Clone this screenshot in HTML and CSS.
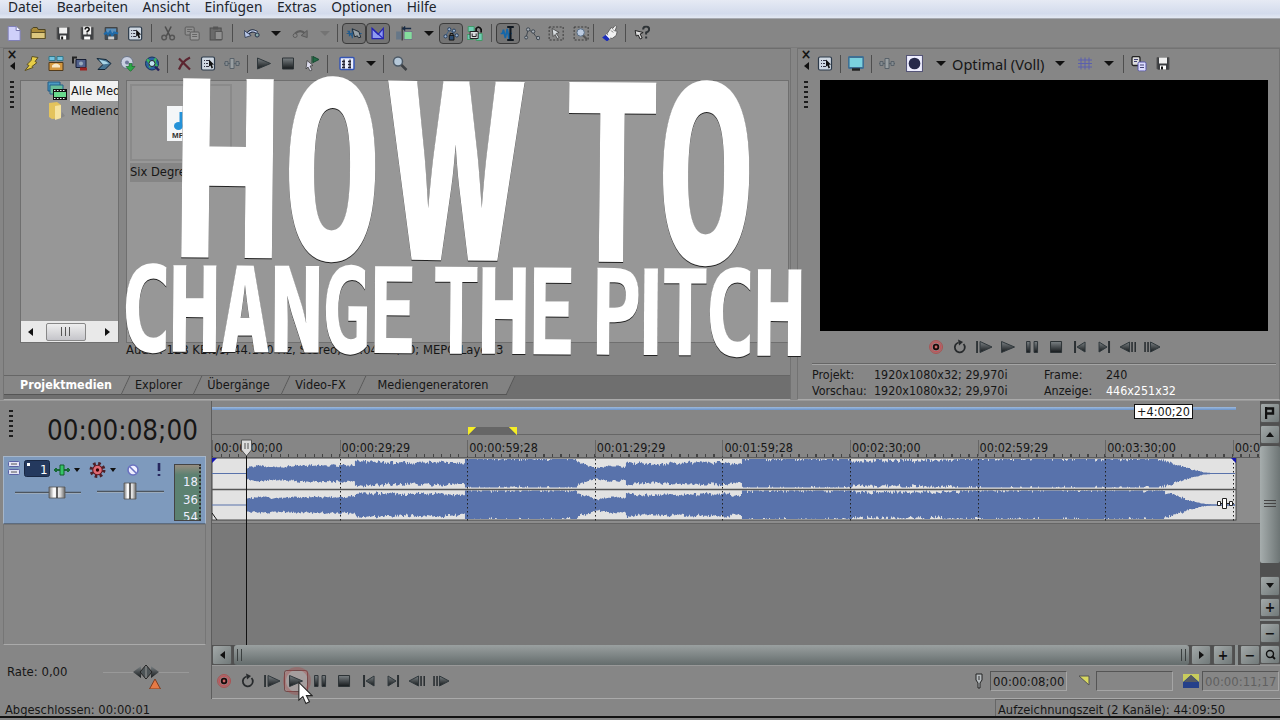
FILE: index.html
```html
<!DOCTYPE html>
<html lang="de">
<head>
  <meta charset="UTF-8">
  <title>Projekt</title>
  <link rel="stylesheet" href="styles.css">
</head>
<body>

  <!-- icon sprites -->
  <svg class="sprites" width="0" height="0">
    <defs>
      <linearGradient id="metal" x1="0" y1="0" x2="0" y2="1"><stop offset="0" stop-color="#7b8184"/><stop offset="1" stop-color="#15191b"/></linearGradient>
      <linearGradient id="knob" x1="0" y1="0" x2="1" y2="0"><stop offset="0" stop-color="#777"/><stop offset=".3" stop-color="#fff"/><stop offset=".7" stop-color="#ddd"/><stop offset="1" stop-color="#666"/></linearGradient>
    </defs>
    <symbol id="new" viewBox="0 0 16 16"><path d="M2 1h8l4 4v10H2z" fill="#cfd0fa" stroke="#8080b8"/><path d="M10 1v4h4" fill="#fff" stroke="#7777b0"/></symbol>
    <symbol id="open" viewBox="0 0 16 16"><path d="M1 13V4l2-2h4l1 2h7v9z" fill="#a98b3a" stroke="#4c4322"/><path d="M1 7h14v6H1z" fill="#dcc77d" stroke="#5e5127"/></symbol>
    <symbol id="save" viewBox="0 0 16 16"><path d="M2 2h12v12H3l-1-1z" fill="#3b3d40" stroke="#555"/><path d="M4 2h8v6H4z" fill="#eee"/><path d="M5 10h6v4H5z" fill="#fff"/><path d="M6 11h2v3H6z" fill="#111"/></symbol>
    <symbol id="saveas" viewBox="0 0 16 16"><path d="M2 2h12v12H3l-1-1z" fill="#3b3d40" stroke="#555"/><path d="M4 1h8v8H4z" fill="#eee"/><path d="M6 4q0-2 2-2t2 2q0 1-2 2v1M8 8v1" fill="none" stroke="#111" stroke-width="1.500"/><path d="M5 11h6v3H5z" fill="#fff"/></symbol>
    <symbol id="render" viewBox="0 0 16 16"><path d="M2 2h12v12H2z" fill="#3f4d59" stroke="#444"/><path d="M3 3h10v5H3z" fill="#5c8fba"/><path d="M1 9l2-2 2 2 2-3 2 4 2-3 4 1" fill="none" stroke="#1f6aa8" stroke-width="2"/><path d="M5 11h6v3H5z" fill="#ccc"/></symbol>
    <symbol id="props" viewBox="0 0 16 16"><rect x="1.500" y="1.500" width="13" height="13" rx="1.500" fill="#cfd8e2" stroke="#2c3a4a" stroke-width="1.200"/><path d="M4 5h1M6 5h3M4 8h1M6 8h2M4 11h1M6 11h3" stroke="#334" stroke-width="1.200"/><path d="M9 4l5 5-2 .3 1 3-1.500.7-1-3L9 11z" fill="#111"/></symbol>
    <symbol id="cut" viewBox="0 0 16 16"><path d="M5 1l5 10M11 1L6 11" stroke="#4d4d4d" stroke-width="1.600"/><circle cx="4" cy="12" r="2.300" fill="none" stroke="#555" stroke-width="1.500"/><circle cx="12" cy="12" r="2.300" fill="none" stroke="#555" stroke-width="1.500"/></symbol>
    <symbol id="copy" viewBox="0 0 16 16"><rect x="1" y="1.500" width="9" height="8" rx="1" fill="#8f8f8f" stroke="#5c5c5c"/><rect x="6" y="6.500" width="9" height="8" rx="1" fill="#999" stroke="#5c5c5c"/><path d="M3 4h5M3 6h3M8 9h5M8 11h5" stroke="#666"/></symbol>
    <symbol id="paste" viewBox="0 0 16 16"><rect x="2" y="2.500" width="11" height="12" fill="#6a6a6a" stroke="#4d4d4d"/><path d="M5 1h5v3H5z" fill="#555"/><path d="M7 6h7v8H7z" fill="#919191" stroke="#555"/></symbol>
    <symbol id="undo" viewBox="0 0 16 16"><path d="M3 9q4-6 10-2" fill="none" stroke="#222d44" stroke-width="3"/><path d="M3 9q4-6 10-2" fill="none" stroke="#c5d4f2" stroke-width="1.200"/><path d="M0 5l1 7 6-2z" fill="#b9c8ea" stroke="#26324a" stroke-width=".8"/><circle cx="13" cy="9.500" r="2" fill="#8aa" stroke="#26324a"/></symbol>
    <symbol id="redo" viewBox="0 0 16 16"><path d="M3 8q5-5 10 0" fill="none" stroke="#5d5d5d" stroke-width="2.200"/><path d="M15 5l0 7-6-2z" fill="#777" stroke="#5a5a5a"/><circle cx="3" cy="10" r="2" fill="#888" stroke="#5d5d5d"/></symbol>
    <symbol id="snap" viewBox="0 0 16 16"><path d="M0 8h16M3 5v6M1 5l5 6M6 3v10" fill="none" stroke="#235b8c" stroke-width="1.300"/><path d="M6 3l7 3 2 6-2.500.5-1-2-3 1z" fill="#98a2a8" stroke="#1b2733"/></symbol>
    <symbol id="fade" viewBox="0 0 16 16"><path d="M1.500 2.500v11h12v-11L8 9z" fill="#8f9af0" stroke="#2525b0" stroke-width="1.300"/><path d="M1.500 2.500l12 11" stroke="#2121b8" stroke-width="1.300"/></symbol>
    <symbol id="ripple" viewBox="0 0 16 16"><path d="M6 1v14" stroke="#222"/><path d="M0 6h5v8H0z" fill="#678"/><path d="M8 6h8v8H8z" fill="#85dd9d" stroke="#527"  stroke-width=".4"/><path d="M15 3H7l2-2M7 3l2 2" fill="none" stroke="#182b44" stroke-width="1.400"/></symbol>
    <symbol id="envlock" viewBox="0 0 16 16"><path d="M2 11l4-7 4 3 4 4" fill="none" stroke="#3c628e"/><g fill="#9db4cf" stroke="#233c5c"><circle cx="2" cy="11" r="1.700"/><circle cx="6" cy="3.500" r="1.700"/><circle cx="11" cy="5" r="1.700"/><circle cx="14" cy="10" r="1.700"/></g><path d="M6 10h5v5H6z" fill="#2b4b70" stroke="#111"/><path d="M7 10V8h3v2" fill="none" stroke="#111"/></symbol>
    <symbol id="grouplock" viewBox="0 0 16 16"><path d="M1 1h6v5H1zM0 9h6v5H0zM9 8h6v7H9z" fill="#70cbb4" stroke="#496"/><path d="M3 6h8v7H3z" fill="#d8dcde" stroke="#222"/><path d="M9 6V3q3-3 5 1v3" fill="none" stroke="#111" stroke-width="1.700"/><path d="M5 8v3h4V8" stroke="#222" fill="none"/></symbol>
    <symbol id="edit" viewBox="0 0 16 16"><path d="M0 8h2l1-4 2 9 2-10 2 11 1-6h2" fill="none" stroke="#1467aa" stroke-width="1.800"/><path d="M7 1h7M7 15h7M10.500 1v14" stroke="#101820" stroke-width="2.200"/></symbol>
    <symbol id="env" viewBox="0 0 16 16"><path d="M2 12l2-8 5 3 2 3 3 3" fill="none" stroke="#414850"/><g fill="#a6adb5" stroke="#3d4650"><circle cx="2" cy="12" r="1.500"/><circle cx="4" cy="4" r="1.700"/><circle cx="9" cy="6" r="1.700"/><circle cx="14" cy="12.500" r="1.700"/></g></symbol>
    <symbol id="select" viewBox="0 0 16 16"><rect x="1" y="1.500" width="14" height="13" fill="none" stroke="#3a3a3a" stroke-dasharray="2 1.500"/><path d="M4 3l7 4-3 1 3 4-2 1-2-4-2 2z" fill="#d7dcdf" stroke="#333" stroke-width=".7"/></symbol>
    <symbol id="zoomsel" viewBox="0 0 16 16"><rect x="1" y="1.500" width="14" height="13" fill="none" stroke="#3a3a3a" stroke-dasharray="2 1.500"/><circle cx="7.500" cy="7" r="3.700" fill="#bccbe0" stroke="#5a7089"/><path d="M10 10l4 4" stroke="#555" stroke-width="2"/></symbol>
    <symbol id="hand" viewBox="0 0 16 16"><path d="M5 8l4-6 1.500 1L13 0l1.500 1-1.500 4 2 1-1 4-4 3-4-1z" fill="#f0f0f0" stroke="#444" stroke-width=".7"/><path d="M9 5l2 2M11 4l2 2" stroke="#555" stroke-width=".8"/><path d="M0 12l4-3 4 4-3 3z" fill="#1b2dbb"/><path d="M4 9l4 4" stroke="#fff" stroke-width="1.200"/></symbol>
    <symbol id="help" viewBox="0 0 16 16"><path d="M1 5l8 2-3 1.500 2 4-2 1-2-4-2 1z" fill="#ddd" stroke="#222"/><path d="M9 4q0-3 3-3t3 3q0 2-3 3v2M12 11v2" fill="none" stroke="#2e3336" stroke-width="2"/></symbol>
    <symbol id="bolt" viewBox="0 0 16 16"><path d="M8 1l6 1-3 4 2 1-5 4 1 1-8 3 4-5-2-1 4-4z" fill="#e7cd48" stroke="#5d5222"/></symbol>
    <symbol id="import" viewBox="0 0 16 16"><path d="M1 1h6v4H1zM9 1h6v4H9z" fill="#72c2df" stroke="#378"/><path d="M1 7h14v8H1z" fill="#d49840" stroke="#533b1b"/><path d="M4 10q4-4 8 0v2H4z" fill="#f7e8c6"/></symbol>
    <symbol id="camera" viewBox="0 0 16 16"><path d="M1 1v7M0 2h5" stroke="#222" stroke-width="2"/><path d="M4 4h10v8H4z" fill="#52618c" stroke="#161d33"/><circle cx="9" cy="8" r="2" fill="#9ab"/><path d="M8 12h7v3H8z" fill="#9c2422"/></symbol>
    <symbol id="scan" viewBox="0 0 16 16"><path d="M1 3l9 1 5 4-6 6H2l5-5z" fill="#467493" stroke="#132738"/><path d="M3 4l7 2 3 2-6 1z" fill="#a8d5e7"/></symbol>
    <symbol id="disc" viewBox="0 0 16 16"><circle cx="7" cy="7" r="6" fill="#c8cfe0" stroke="#6b7587"/><circle cx="7" cy="7" r="2" fill="#70789a"/><path d="M9 8h3v3h3l-4.500 5L6 11h3z" fill="#2ba848" stroke="#145c26" stroke-width=".6"/></symbol>
    <symbol id="web" viewBox="0 0 16 16"><circle cx="8" cy="8" r="6.500" fill="#2c62a0" stroke="#15335d"/><path d="M3 4q4 3 3 8M12 3q-3 3 1 8" stroke="#36b65c" stroke-width="2.400" fill="none"/><circle cx="8" cy="8" r="3" fill="#bfe2ef" stroke="#223"/><path d="M11 11l4 4" stroke="#27215c" stroke-width="2.400"/></symbol>
    <symbol id="delete" viewBox="0 0 16 16"><path d="M3 3l11 11M14 2Q6 6 3 14" fill="none" stroke="#5c2530" stroke-width="2.200"/></symbol>
    <symbol id="fx" viewBox="0 0 16 16"><path d="M0 8h16" stroke="#555e66"/><path d="M6 3h4v10H6z" fill="#999fa2" stroke="#59626a"/><path d="M1 6h3v4H1zM12 6h3v4h-3z" fill="#848b90" stroke="#59626a"/></symbol>
    <symbol id="play" viewBox="0 0 16 16"><path d="M1.500 2.500l13 5.500-13 5.500z" fill="url(#metal)" stroke="#30383c"/></symbol>
    <symbol id="stop" viewBox="0 0 16 16"><path d="M2.500 2.500h11v11h-11z" fill="url(#metal)" stroke="#2d3336"/></symbol>
    <symbol id="auto" viewBox="0 0 16 16"><path d="M8 0v8M9 1l6 3-6 3z" fill="#226b45" stroke="#164a30"/><path d="M3 5l6 5-3 .5 2 4-2 1-2-4-2 2z" fill="#dde" stroke="#333" stroke-width=".7"/></symbol>
    <symbol id="views" viewBox="0 0 16 16"><rect x="1" y="2" width="14" height="12" rx="1" fill="#ebeffd" stroke="#3555b4" stroke-width="1.500"/><path d="M3 6h3M3 9h3M3 12h3M9 6h3M9 9h3M9 12h3M5 4v9M11 4v9" stroke="#223" stroke-width="1.300"/></symbol>
    <symbol id="search" viewBox="0 0 16 16"><circle cx="6" cy="6" r="4.500" fill="#b5c8d9" stroke="#4c5966" stroke-width="1.500"/><path d="M9.500 9.500l5 5" stroke="#3d4044" stroke-width="2.500"/></symbol>
    <symbol id="monitor" viewBox="0 0 16 16"><rect x="0.700" y="1.500" width="14.600" height="11" rx="1" fill="#7bd1de" stroke="#3f6f93" stroke-width="1.800"/><path d="M4 14h8" stroke="#222" stroke-width="2.400"/></symbol>
    <symbol id="mask" viewBox="0 0 16 16"><path d="M.5.500h15v15H.5z" fill="#eef" stroke="#557"/><circle cx="8" cy="8" r="5.500" fill="#26294a"/></symbol>
    <symbol id="grid" viewBox="0 0 16 16"><path d="M4 2v12M8 2v12M12 2v12M1 4.500h14M1 8h14M1 11.500h14" stroke="#5a5fae"/></symbol>
    <symbol id="copy2" viewBox="0 0 16 16"><rect x="1" y="1" width="8" height="9" rx="1.500" fill="#ddd" stroke="#222" stroke-width="1.300"/><rect x="7" y="6.500" width="8" height="9" rx="1.500" fill="#dcdcff" stroke="#5555a8"/><path d="M3 4h4M3 6h3M9 9.500h4M9 12h4" stroke="#447"/></symbol>
    <symbol id="record" viewBox="0 0 16 16"><circle cx="8" cy="8" r="6.500" fill="#a17070" stroke="#a85555"/><circle cx="8" cy="8" r="4.800" fill="#9b8080" stroke="#cc4d55"/><circle cx="8" cy="8" r="2.300" fill="#c66" stroke="#180b0b" stroke-width="1.800"/></symbol>
    <symbol id="loop" viewBox="0 0 16 16"><path d="M11.500 5a5 5 0 1 1-5-1.500" fill="none" stroke="#272a2c" stroke-width="1.800"/><path d="M6 .5l5 2.500-4 3.500z" fill="#272a2c"/></symbol>
    <symbol id="playstart" viewBox="0 0 16 16"><path d="M1 2v12" stroke="#2b3033" stroke-width="1.800"/><path d="M4 2.500l12 5.500-12 5.500z" fill="url(#metal)" stroke="#30383c"/></symbol>
    <symbol id="pause" viewBox="0 0 16 16"><path d="M2.500 2.500h3.500v11H2.500zM10 2.500h3.500v11H10z" fill="url(#metal)" stroke="#30363a"/></symbol>
    <symbol id="first" viewBox="0 0 16 16"><path d="M3 2v12" stroke="#2b3033" stroke-width="2"/><path d="M13 3v10L5 8z" fill="url(#metal)" stroke="#30383c"/></symbol>
    <symbol id="last" viewBox="0 0 16 16"><path d="M13 2v12" stroke="#2b3033" stroke-width="2"/><path d="M3 3v10l8-5z" fill="url(#metal)" stroke="#30383c"/></symbol>
    <symbol id="prev" viewBox="0 0 16 16"><path d="M12 3v10M15.200 3v10" stroke="#2b3033" stroke-width="1.600"/><path d="M9.500 3v10L0 8z" fill="url(#metal)" stroke="#30383c"/></symbol>
    <symbol id="next" viewBox="0 0 16 16"><path d="M1 3v10M4 3v10" stroke="#2b3033" stroke-width="1.600"/><path d="M6.500 3v10L16 8z" fill="url(#metal)" stroke="#30383c"/></symbol>
    <symbol id="gear" viewBox="0 0 16 16"><circle cx="8" cy="8" r="6" fill="none" stroke="#4d2027" stroke-width="3" stroke-dasharray="2.400 2.300"/><circle cx="8" cy="8" r="4.500" fill="#e06a74" stroke="#5f1820"/><circle cx="8" cy="8" r="1.600" fill="#300"/></symbol>
  </svg>

  <nav class="menu">
    <span>Datei</span><span>Bearbeiten</span><span>Ansicht</span><span>Einfügen</span><span>Extras</span><span>Optionen</span><span>Hilfe</span>
  </nav>

  <div class="toolbar main-bar">
    <svg><use href="#new"/></svg><svg><use href="#open"/></svg><svg><use href="#save"/></svg><svg><use href="#saveas"/></svg><svg><use href="#render"/></svg><svg><use href="#props"/></svg>
    <i class="sep"></i>
    <svg><use href="#cut"/></svg><svg><use href="#copy"/></svg><svg><use href="#paste"/></svg>
    <i class="sep wide"></i>
    <svg><use href="#undo"/></svg><i class="drop"></i><svg><use href="#redo"/></svg><i class="drop off"></i>
    <i class="sep tight"></i>
    <svg class="on"><use href="#snap"/></svg><svg class="on"><use href="#fade"/></svg><svg class="nudge"><use href="#ripple"/></svg><i class="drop nudge"></i><svg class="on"><use href="#envlock"/></svg><svg><use href="#grouplock"/></svg>
    <i class="sep"></i>
    <svg class="on"><use href="#edit"/></svg><svg><use href="#env"/></svg><svg><use href="#select"/></svg><svg><use href="#zoomsel"/></svg>
    <i class="sep tight"></i>
    <svg><use href="#hand"/></svg>
    <i class="sep"></i>
    <svg><use href="#help"/></svg>
  </div>

  <main class="upper">
    <section class="media">
      <div class="gutter"><b>×</b><i class="tri-left"></i><i class="grip"></i></div>
      <div class="media-body">
        <div class="toolbar">
          <svg><use href="#bolt"/></svg><svg><use href="#import"/></svg><svg><use href="#camera"/></svg><svg><use href="#scan"/></svg><svg><use href="#disc"/></svg><svg><use href="#web"/></svg>
          <i class="sep"></i>
          <svg><use href="#delete"/></svg><svg><use href="#props"/></svg><svg><use href="#fx"/></svg>
          <i class="sep"></i>
          <svg><use href="#play"/></svg><svg><use href="#stop"/></svg><svg><use href="#auto"/></svg>
          <i class="sep wide"></i>
          <svg><use href="#views"/></svg><i class="drop"></i>
          <i class="sep tight"></i>
          <svg><use href="#search"/></svg>
        </div>
        <div class="browser">
          <div class="tree">
            <div class="node">
              <svg viewBox="0 0 20 20"><path d="M1 1h12v9H1z" fill="#4b9bc2" stroke="#235b83"/><path d="M3 4h13v9H3z" fill="#69bf9a" stroke="#24618c"/><path d="M6 8h14v11H6z" fill="#111"/><path d="M7 11h12v5H7z" fill="#68d98c"/><path d="M7 9.500h12M7 17.500h12" stroke="#eee" stroke-dasharray="1.500 1.500"/></svg>
              <span class="picked">Alle Medien</span>
            </div>
            <div class="node">
              <svg viewBox="0 0 20 20"><path d="M2 2l8-1 4 3v13l-9 1-3-2z" fill="#e3c35c"/><path d="M8 5l6-1v13l-6 2z" fill="#f5e3a0"/><path d="M15 11l3 4-4 2z" fill="#777" opacity=".5"/></svg>
              <span>Medienordner</span>
            </div>
            <div class="tree-scroll"><i class="tri-left"></i><b></b><i class="tri-right"></i></div>
          </div>
          <div class="files">
            <div class="thumb">
              <svg width="34" height="35" viewBox="0 0 34 35"><path d="M0 0h34v35H0z" fill="#f4f6f8"/><ellipse cx="11.500" cy="20" rx="4.500" ry="4" fill="#2492d8"/><path d="M14 6v14" stroke="#2492d8" stroke-width="3"/><text x="5" y="32" class="mp3">MP3</text></svg>
            </div>
            <div class="file-name">Six Degrees</div>
          </div>
        </div>
        <div class="file-info">Audio: 128 KBit/s, 44.100 Hz, Stereo, 00:04:00;20; MEPG Layer 3</div>
      </div>
      <div class="tabs">
        <span class="active">Projektmedien</span><span>Explorer</span><span>Übergänge</span><span>Video-FX</span><span>Mediengeneratoren</span>
      </div>
    </section>

    <section class="preview">
      <div class="gutter"><b>×</b><i class="tri-left"></i><i class="grip"></i></div>
      <div class="preview-body">
        <div class="toolbar">
          <svg><use href="#props"/></svg><i class="sep"></i><svg><use href="#monitor"/></svg><i class="sep"></i><svg><use href="#fx"/></svg><svg class="mask"><use href="#mask"/></svg><i class="drop small"></i><span class="quality">Optimal (Voll)</span><i class="drop"></i><svg class="hash"><use href="#grid"/></svg><i class="drop small"></i><i class="sep"></i><svg><use href="#copy2"/></svg><svg><use href="#save"/></svg>
        </div>
        <div class="screen"></div>
        <div class="transport">
          <svg><use href="#record"/></svg><svg><use href="#loop"/></svg><svg><use href="#playstart"/></svg><svg><use href="#play"/></svg><svg><use href="#pause"/></svg><svg><use href="#stop"/></svg><svg><use href="#first"/></svg><svg><use href="#last"/></svg><svg><use href="#prev"/></svg><svg><use href="#next"/></svg>
        </div>
        <div class="facts">
          <span>Projekt:</span><span>1920x1080x32; 29,970i</span><span>Frame:</span><span>240</span>
          <span>Vorschau:</span><span>1920x1080x32; 29,970i</span><span>Anzeige:</span><span class="lit">446x251x32</span>
        </div>
      </div>
    </section>
  </main>

  <section class="timeline">
    <div class="left-col">
      <div class="timecode"><i class="grip"></i><span>00:00:08;00</span></div>
      <div class="track-head">
        <svg width="171" height="67" viewBox="0 0 171 67">
          <g fill="#e4e4f5" stroke="#5a61a5"><rect x="4.500" y="4.500" width="11" height="5" rx="1"/><rect x="4.500" y="12.500" width="11" height="5" rx="1"/></g>
          <path d="M7 7h6M7 15h6" stroke="#555"/>
          <rect x="20.500" y="3.500" width="25" height="16" rx="2" fill="#24395e" stroke="#182742"/>
          <path d="M23 6h3v3h-3z" fill="#fff"/><text x="36" y="17" class="num">1</text>
          <path d="M50 13h16" stroke="#176b35" stroke-width="2"/><path d="M56 8h4v10h-4z" fill="#35c566" stroke="#125c2b"/><path d="M51 11h2v4h-2zM63 11h2v4h-2z" fill="#176b35"/>
          <path d="M70 11h6l-3 4zM106 11h6l-3 4z" fill="#111"/>
          <use href="#gear" x="85" y="4.500" width="17" height="17"/>
          <circle cx="129" cy="13" r="5" fill="#eef" stroke="#6a72c0" stroke-width="1.600"/><path d="M126 10l6 6" stroke="#6a72c0" stroke-width="1.600"/>
          <path d="M155 6v8M155 17v2" stroke="#27275e" stroke-width="2.600"/>
          <path d="M11 35.500h66M93 34.500h67" stroke="#4d555e" stroke-width="1.500"/>
          <path d="M11 36.500h66M93 35.500h67" stroke="#b9c2cc" stroke-width=".6"/>
          <path d="M45 30h16v11H45z" fill="url(#knob)" stroke="#555" stroke-width=".8"/>
          <path d="M120 26h12v16h-12z" fill="url(#knob)" stroke="#555" stroke-width=".8"/>
          <path d="M53 30v11M126 26v16" stroke="#333" stroke-width="1.500"/>
        </svg>
        <div class="meter"><span>18</span><span>36</span><span>54</span></div>
      </div>
      <div class="empty-head"></div>
      <div class="rate">
        <span>Rate: 0,00</span>
        <svg width="94" height="30" viewBox="0 0 94 30"><path d="M4 13.500h86" stroke="#999"/><path d="M34 13l8-6v12zM60 13l-8-6v12z" fill="url(#metal)"/><path d="M47 6l6 7-6 7-6-7z" fill="#4d5457" stroke="#222"/><path d="M47 7v12" stroke="#999"/><path d="M56 20l5.500 10h-11z" fill="#e57a45" stroke="#7d3c20"/></svg>
      </div>
    </div>

    <div class="right-col">
      <div class="marker-bar">
        <i class="extent"></i>
        <span class="tip">+4:00;20</span>
        <i class="region"></i>
      </div>
      <div class="ruler" id="ruler"></div>
      <div class="track">
        <svg id="wave" width="1048" height="65" viewBox="212 459 1048 65"></svg>
      </div>
      <div class="void"></div>
      <div class="hscroll">
        <b><i class="tri-left"></i></b><span class="hthumb"><i></i><i></i></span><b><i class="tri-right"></i></b><b>+</b><em></em><b>−</b>
      </div>
      <div class="controls">
        <svg><use href="#record"/></svg><svg><use href="#loop"/></svg><svg><use href="#playstart"/></svg><svg class="pressed"><use href="#play"/></svg><svg><use href="#pause"/></svg><svg><use href="#stop"/></svg><svg><use href="#first"/></svg><svg><use href="#last"/></svg><svg><use href="#prev"/></svg><svg><use href="#next"/></svg>
        <div class="fields">
          <svg viewBox="0 0 16 16"><path d="M5 1h6v6l-2 3v5H7v-5L5 7z" fill="#b5babd" stroke="#222"/><path d="M8 3v4" stroke="#333"/></svg>
          <span class="field">00:00:08;00</span>
          <svg viewBox="0 0 16 16"><path d="M2 3h10v9z" fill="#d8d860" stroke="#555"/></svg>
          <span class="field"></span>
          <svg viewBox="0 0 16 16"><path d="M0 1h16v9H0z" fill="#c8cc5c"/><path d="M8 2l8 7v6H0V9z" fill="#25408a"/><path d="M8 2l7 7H1z" fill="#555a62"/></svg>
          <span class="field dim">00:00:11;17</span>
        </div>
      </div>
    </div>

    <div class="vscroll">
      <b><svg width="10" height="12" viewBox="0 0 10 12"><path d="M1 0v12M1 1.500h7v5H1" fill="none" stroke="#111" stroke-width="2.400"/></svg></b>
      <b><i class="tri-up"></i></b>
      <span class="vthumb"></span>
      <b><i class="tri-down"></i></b><b>+</b><em></em><b>−</b>
      <b><svg width="11" height="11" viewBox="0 0 11 11"><circle cx="5" cy="5" r="3.500" fill="none" stroke="#111" stroke-width="1.400"/><path d="M7 7l3 3" stroke="#111" stroke-width="1.800"/></svg></b>
    </div>
  </section>

  <footer class="status">
    <span>Abgeschlossen: 00:00:01</span>
    <span class="rec-time">Aufzeichnungszeit (2 Kanäle): 44:09:50</span>
  </footer>

  <svg class="overlay" id="playhead" width="1280" height="720"></svg>
  <svg class="overlay headline" id="headline" width="1280" height="720"></svg>

  <i class="click-ring"></i>
  <svg class="cursor" width="15" height="24" viewBox="0 0 17 26"><path d="M1 1v20l4.500-4 3.500 8 4-2-3.500-7H16z" fill="#fff" stroke="#222" stroke-width="1.200"/></svg>

  <script src="script.js"></script>
</body>
</html>
```
FILE: styles.css
```css
* {
  box-sizing: border-box;
}
body {
  margin: 0;
  width: 1280px;
  height: 720px;
  overflow: hidden;
  position: relative;
  display: flex;
  flex-direction: column;
  background: #868686;
  color: #161616;
  font-family: "DejaVu Sans Condensed", "DejaVu Sans", sans-serif;
  font-stretch: condensed;
  font-size: 12px;
}
i, b, em {
  font-style: normal;
}
svg {
  display: block;
  flex: none;
}
.sprites {
  position: absolute;
}

/* menu */
.menu {
  height: 19px;
  display: flex;
  gap: 14.500px;
  padding: 0 8px;
  background: linear-gradient(#e6eaf4, #d3dbec 75%, #e3e8f2);
  border-bottom: 1px solid #a6a9b0;
  font-family: "Noto Sans", sans-serif;
  font-size: 13.800px;
  font-stretch: normal;
  line-height: 14px;
  color: #20242c;
}

/* toolbars */
.toolbar {
  display: flex;
  align-items: center;
  height: 31px;
  padding-bottom: 2px;
}
.toolbar > svg {
  width: 24px;
  height: 21px;
  padding: 2.500px 4px;
}
.main-bar {
  height: 29px;
  padding: 0 0 0 2px;
  border-bottom: 1px solid #7b7b7b;
}
.main-bar > svg, .main-bar > .drop {
  width: 24.300px;
}
.toolbar > .on {
  border: 1px solid #3c3c3c;
  border-radius: 4px;
  background: #747474;
  padding: 2px 3px;
}
.toolbar > .nudge {
  transform: translateX(2px);
}
.sep {
  width: 1px;
  height: 18px;
  margin: 0 4px 0 3px;
  background: #4e4e4e;
}
.sep.wide {
  margin-right: 7px;
}
.sep.tight {
  margin: 0 4px 0 0;
}
.drop {
  width: 24px;
  display: flex;
  justify-content: center;
}
.drop::after {
  content: "";
  border: 5px solid transparent;
  border-top-color: #111;
  border-bottom: 0;
}
.drop.off::after {
  border-top-color: #747474;
}
.preview .drop.small {
  width: 22px;
}
.tri-left, .tri-right, .tri-up, .tri-down {
  width: 0;
  height: 0;
  border: 4px solid transparent;
}
.tri-left { border-right: 5px solid #111; border-left: 0; }
.tri-right { border-left: 5px solid #111; border-right: 0; }
.tri-up { border-bottom: 5px solid #111; border-top: 0; }
.tri-down { border-top: 5px solid #111; border-bottom: 0; }
.grip {
  width: 4px;
  height: 30px;
  background: repeating-linear-gradient(#1d1d1d 0 2px, transparent 2px 5px);
}
.gutter {
  width: 16px;
  display: flex;
  flex-direction: column;
  align-items: center;
}
.gutter b {
  height: 14px;
  margin-top: -1px;
  font-size: 14px;
  line-height: 13px;
}
.gutter .grip {
  margin-top: 11px;
}

/* upper docks */
.upper {
  display: flex;
  height: 352px;
  gap: 6px;
  padding-left: 3px;
}
.media {
  width: 788px;
  display: grid;
  grid-template-columns: 16px 1fr;
  grid-template-rows: 1fr 24px;
  border: 1px solid #737373;
  border-top-color: #6d6d6d;
  border-bottom-color: #aaa;
}
.browser {
  display: flex;
  gap: 7px;
  height: 263px;
}
.tree {
  width: 99px;
  background: #979797;
  border: 1px solid #6f6f6f;
  overflow: hidden;
  display: flex;
  flex-direction: column;
}
.node {
  display: flex;
  height: 20px;
  padding-left: 26px;
}
.node svg {
  width: 20px;
  height: 20px;
}
.node span {
  margin-left: 3px;
  padding-left: 1px;
  width: 80px;
  font-size: 12.800px;
  line-height: 20px;
  white-space: nowrap;
}
.node .picked {
  background: #f1f1f1;
}
.tree-scroll {
  margin-top: auto;
  height: 21px;
  display: flex;
  align-items: center;
  justify-content: space-between;
  padding: 0 8px 0 7px;
  background: #e9e9e9;
}
.tree-scroll b {
  width: 40px;
  height: 18px;
  margin-right: 7px;
  border: 1px solid #888;
  border-radius: 2px;
  background: repeating-linear-gradient(90deg, #555 0 1px, transparent 1px 4px) center / 10px 9px no-repeat, linear-gradient(#eee, #c5c5ca);
}
.files {
  width: 663px;
  background: #979797;
  border: 1px solid #6f6f6f;
  padding: 3px;
}
.thumb {
  width: 102px;
  height: 77px;
  border: 2px solid #8a8a8a;
  padding: 20px 0 0 35px;
}
.mp3 {
  font: bold 8px "Liberation Sans", sans-serif;
  fill: #333;
}
.file-name {
  width: 102px;
  height: 19px;
  margin-top: 2px;
  background: #858585;
  font-size: 12.800px;
  line-height: 18px;
}
.file-info {
  padding: 0 0 0 106px;
  line-height: 14px;
  font-size: 12.900px;
}
.tabs {
  grid-column: 1 / 3;
  display: flex;
  align-items: center;
  background: #6f6f6f;
  border-top: 1px solid #666;
  overflow: hidden;
}
.tabs span {
  position: relative;
  z-index: 0;
  height: 19px;
  align-self: flex-start;
  text-align: center;
  line-height: 18px;
  width: 72px;
  padding-right: 7px;
  font-size: 12.600px;
}
.tabs span::before {
  content: "";
  position: absolute;
  z-index: -1;
  inset: 0;
  background: #828282;
  border-right: 1px solid #555;
  border-bottom: 1px solid #555;
  transform: skewX(-25deg);
}
.tabs .active {
  width: 122px;
  padding: 0 0 0 2px;
  color: #fff;
  font-weight: bold;
  font-size: 12.400px;
}
.tabs .active::before {
  left: -10px;
  background: #868686;
}
.tabs span:nth-child(3) { width: 88px; }
.tabs span:nth-child(4) { width: 76px; }
.tabs span:nth-child(5) { width: 149px; }

/* preview dock */
.preview {
  width: 483px;
  display: flex;
  border: 1px solid #737373;
  border-bottom-color: #aaa;
}
.preview-body {
  flex: 1;
  padding-right: 3px;
}
.preview .toolbar {
  margin-left: -1px;
}
.preview .toolbar > .sep {
  margin: 0 3px;
}
.toolbar > .mask {
  width: 31px;
  height: 17px;
  padding: 0 7px;
}
.toolbar > .hash {
  width: 26px;
}
.quality {
  width: 96px;
  font-family: "Noto Sans", sans-serif;
  font-size: 14.600px;
  font-stretch: normal;
  white-space: nowrap;
}
.screen {
  width: 448px;
  height: 251px;
  margin-left: 6px;
  background: #000;
}
.transport {
  display: flex;
  justify-content: center;
  height: 32px;
  align-items: center;
  padding: 0 2px 0 0;
}
.transport svg, .controls > svg {
  width: 24.100px;
  height: 16px;
  padding: 0 4px;
}
.facts {
  display: grid;
  grid-template-columns: 62px 170px 62px 1fr;
  border-top: 1px solid #666;
  box-shadow: inset 0 1px #a5a5a5;
  padding-top: 3px;
  margin-left: -2px;
  line-height: 16px;
  font-size: 12.400px;
}
.lit {
  color: #fff;
}

/* timeline */
.timeline {
  display: grid;
  grid-template-columns: 208px 1049px 20px;
  padding-left: 3px;
  height: 299px;
  border-top: 1px solid #999;
}
.left-col {
  display: flex;
  flex-direction: column;
  padding-right: 5px;
}
.timecode {
  height: 55px;
  display: flex;
  padding: 9px 0 0 6px;
}
.timecode span {
  margin-left: 34px;
  font-size: 27.500px;
  line-height: 40px;
}
.track-head {
  height: 68px;
  display: flex;
  background: #7e9abd;
  border: 1px solid #a5b6ca;
  border-bottom-color: #5c6c80;
  overflow: hidden;
}
.num {
  font: 12px "DejaVu Sans", sans-serif;
  fill: #fff;
}
.meter {
  width: 27px;
  height: 57px;
  margin: 7px 0 0 -1px;
  padding: 8px 1px 0 0;
  overflow: hidden;
  display: flex;
  flex-direction: column;
  align-items: flex-end;
  background: linear-gradient(#968d80, #5c8171 18%, #5c8171);
  border: 1px solid #444;
  border-right: 2px dotted #333;
  color: #eef;
  line-height: 17.500px;
  font-size: 13px;
}
.empty-head {
  flex: 1;
  border: 1px solid #767676;
  border-bottom-color: #aaa;
}
.rate {
  height: 54px;
  display: flex;
  gap: 32px;
  padding: 14px 0 0 4px;
  line-height: 26px;
  font-size: 13px;
}
.right-col {
  display: flex;
  flex-direction: column;
  border-left: 1px solid #5d5d5d;
}
.marker-bar {
  position: relative;
  height: 34px;
  border-bottom: 1px solid #666;
}
.extent {
  display: block;
  width: 1024px;
  height: 3px;
  margin-top: 6px;
  background: linear-gradient(#9db9dc, #6b93c8);
}
.tip {
  position: absolute;
  left: 922px;
  top: 3px;
  width: 59px;
  height: 15px;
  background: #fff;
  border: 1px solid #111;
  text-align: center;
  line-height: 14px;
  font-size: 12.500px;
}
.region {
  position: absolute;
  left: 256px;
  top: 26px;
  width: 49px;
  height: 8px;
  background: linear-gradient(135deg, #f6ee25 5.500px, transparent 6px), linear-gradient(225deg, #f6ee25 5.500px, transparent 6px), #666;
}
.ruler {
  position: relative;
  height: 23px;
  overflow: hidden;
  border-bottom: 1px solid #5d5d5d;
  background: repeating-linear-gradient(90deg, #444 0 1px, transparent 1px 8.500px) 0 19px / 100% 3px no-repeat;
}
.ruler span {
  position: absolute;
  top: 5px;
  padding-left: 1px;
  border-left: 1px solid #666;
  white-space: nowrap;
  font-size: 12.500px;
  line-height: 16px;
}
.track {
  height: 66px;
  background: #8c8c8c;
  border-bottom: 1px solid #666;
}
.void {
  flex: 1;
  background: #797979;
}
.hscroll {
  height: 20px;
  display: flex;
  gap: 2px;
  background: #505050;
}
.hscroll b, .vscroll b {
  display: flex;
  align-items: center;
  justify-content: center;
  background: linear-gradient(135deg, #a3a9a9, #717979);
  border: 1px solid #555;
  border-radius: 2px;
  font-size: 14px;
  line-height: 12px;
  color: #111;
}
.hscroll b {
  width: 20px;
}
.hthumb {
  flex: 1;
  display: flex;
  justify-content: space-between;
  align-items: center;
  padding: 0 3px;
  border-radius: 3px;
  background: linear-gradient(#9aa0a0, #646c6c);
}
.hthumb i {
  width: 5px;
  height: 12px;
  border: solid #3a3f3f;
  border-width: 0 1px;
}
.hscroll em {
  width: 3px;
  background: #8b9191;
}
.controls {
  display: flex;
  align-items: center;
  height: 34px;
  width: 1068px;
  padding-bottom: 2px;
  border-top: 1px solid #999;
  border-bottom: 1px solid #aaa;
}
.controls > svg.pressed {
  height: 22px;
  padding: 3px 4px;
  border-radius: 3px;
  background: #a59e9e;
  box-shadow: inset 0 0 0 1px #6e4a4a;
}
.fields {
  margin-left: auto;
  display: flex;
  align-items: center;
  padding-right: 1px;
}
.fields svg {
  width: 16px;
  height: 16px;
  margin: 0 3px 0 10px;
}
.field {
  width: 77px;
  height: 20px;
  padding-left: 2px;
  border: 1px solid #555;
  border-right-color: #a5a5a5;
  border-bottom-color: #a5a5a5;
  line-height: 19px;
  font-size: 13px;
}
.dim {
  color: #606060;
}
.vscroll {
  display: flex;
  flex-direction: column;
  gap: 2px;
  height: 263px;
  padding-top: 2px;
  background: #505050;
}
.vscroll b {
  height: 19.500px;
  flex: none;
}
.vthumb {
  flex: 1;
  margin-bottom: 11px;
  border-radius: 2px;
  background: repeating-linear-gradient(#444 0 1px, transparent 1px 3px) center / 12px 9px no-repeat, linear-gradient(90deg, #a6adad, #6d7575);
}
.vscroll em {
  height: 2px;
  background: #8b9191;
}

/* status bar */
.status {
  height: 19px;
  display: flex;
  justify-content: space-between;
  padding-left: 5px;
  border-bottom: 2px solid #111;
  line-height: 21px;
  font-size: 12.800px;
}
.rec-time {
  width: 285px;
  padding-left: 2px;
  border: solid #666;
  border-width: 1px 0 0 1px;
  line-height: 19px;
}

/* things over the window */
.overlay {
  position: absolute;
  left: 0;
  top: 0;
}
.headline {
  font-family: Inter, Roboto, sans-serif;
  font-weight: 900;
  font-stretch: normal;
  fill: #fff;
  filter: drop-shadow(0 1px .6px #222);
}
.headline .mono {
  font-family: "DejaVu Sans Mono", monospace;
  font-weight: bold;
}
.click-ring {
  position: absolute;
  left: 283px;
  top: 667px;
  width: 28px;
  height: 28px;
  border: 3px solid rgba(165, 70, 70, .35);
  border-radius: 50%;
}
.cursor {
  position: absolute;
  left: 298px;
  top: 681px;
}
```
FILE: script.js
```js
const NS = 'http://www.w3.org/2000/svg';

function add(parent, tag, attrs, text) {
  const el = document.createElementNS(NS, tag);
  for (const k in attrs) el.setAttribute(k, attrs[k]);
  if (text) el.textContent = text;
  parent.appendChild(el);
  return el;
}

// ruler labels, one every 127.6px
const times = ['00:00:00;00', '00:00:29;29', '00:00:59;28', '00:01:29;29', '00:01:59;28', '00:02:30;00', '00:02:59;29', '00:03:30;00', '00:03:59;29'];
const ruler = document.getElementById('ruler');
times.forEach((t, i) => {
  const s = document.createElement('span');
  s.textContent = t;
  s.style.left = (i * 127.6) + 'px';
  ruler.appendChild(s);
});

// loudness along the clip: [x, amplitude]
const env = [[246, 6], [262, 8], [275, 6.5], [300, 8], [354, 8.5], [355, 12], [400, 11], [440, 11.5], [464, 10], [465, 15], [576, 15], [577, 12], [596, 5.5], [612, 8], [625, 7], [626, 11.5], [655, 9.5], [690, 11], [729, 11], [730, 9.5], [741, 9.5], [742, 15], [850, 15], [852, 13], [958, 13], [960, 15], [1160, 15], [1175, 9.5], [1190, 4.5], [1203, 1.2], [1212, .5], [1235, .4]];
let seed = 7;
function rnd() {
  seed = (seed * 16807) % 2147483647;
  return seed / 2147483647;
}
function level(x) {
  for (let i = 1; i < env.length; i++) {
    if (x <= env[i][0]) {
      const [x0, a0] = env[i - 1];
      const [x1, a1] = env[i];
      return a0 + (a1 - a0) * (x - x0) / (x1 - x0);
    }
  }
  return 0;
}

const wave = document.getElementById('wave');
add(wave, 'rect', {x: 212, y: 459, width: 1024, height: 62, fill: '#e2e2e2', stroke: '#444'});
[474.5, 506].forEach(cy => {
  let d = '';
  let drift = 0.5;
  for (let x = 246; x < 1235; x++) {
    const a = level(x);
    if (x % 3 === 0) drift = rnd();
    const top = Math.min(14.5, a * (0.78 + drift * 0.18 + rnd() * 0.22));
    const bottom = Math.min(14, a * (0.78 + drift * 0.18 + rnd() * 0.22));
    d += `M${x + .5} ${(cy - top).toFixed(1)}V${(cy + bottom).toFixed(1)}`;
  }
  add(wave, 'path', {d, stroke: '#5872ab', 'stroke-width': 1.1});
  add(wave, 'path', {d: `M212 ${cy}H1235`, stroke: '#5872ab'});
});
add(wave, 'path', {d: 'M212 490.500H1236', stroke: '#555', 'stroke-width': 1.5});
for (let i = 1; i < 9; i++) {
  add(wave, 'path', {d: `M${Math.round(212 + i * 127.6) + .5} 460V524`, stroke: '#222', 'stroke-dasharray': '1.500 2.500'});
}
add(wave, 'path', {d: 'M212 459h5l-5 5zM1236 459h-5l5 5z', fill: '#1616b4'});
add(wave, 'path', {d: 'M212 514l5 7', stroke: '#111'});
add(wave, 'path', {d: 'M1218 504.500h14', stroke: '#222'});
add(wave, 'path', {d: 'M1222.500 499.500h4v10h-4zM1217.500 502.500h3v4h-3zM1229.500 502.500h3v4h-3z', fill: '#fff', stroke: '#222'});

// playhead runs down over the empty tracks
const head = document.getElementById('playhead');
add(head, 'path', {d: 'M246.500 455V645', stroke: '#111'});
add(head, 'path', {d: 'M241.500 440h10v10l-5 6-5-6z', fill: '#dcdcdc', stroke: '#555'});
add(head, 'path', {d: 'M245 443v6M248 443v6', stroke: '#555'});

// headline letters: [char, left, right], each fitted to its own width
const lines = [
  {size: 246, y: 257, tilt: .6, words: [
    [['H', 181, 272], ['O', 288, 375], ['W', 386, 523]],
    [['T', 567, 655], ['O', 662, 749]]]},
  {size: 119, y: 351.5, tilt: .4, words: [
    [['C', 125, 166], ['H', 172.5, 216], ['A', 221, 268.5], ['N', 274, 318.5], ['G', 325, 367], ['E', 374, 412]],
    [['T', 434.5, 477.5], ['H', 481.5, 525.5], ['E', 533, 571]],
    [['P', 596.5, 638.5], ['I', 643.5, 658], ['T', 663.5, 706.5], ['C', 709, 750], ['H', 757, 801]]]}
];
// these look closer to a condensed poster face in the mono cut
const mono = 'OCGTEP';
const over = document.getElementById('headline');
const ctx = document.createElement('canvas').getContext('2d');
lines.forEach(line => {
  const g = add(over, 'g', {transform: `rotate(${line.tilt} 150 ${line.y})`, 'font-size': line.size});
  line.words.forEach(word => {
    const text = add(g, 'text', {y: line.y});
    word.forEach(([ch, left, right]) => {
      const isMono = mono.includes(ch);
      ctx.font = isMono ? `bold ${line.size}px "DejaVu Sans Mono", monospace` : `900 ${line.size}px Inter, Roboto, sans-serif`;
      const m = ctx.measureText(ch);
      const ink = m.actualBoundingBoxRight + m.actualBoundingBoxLeft;
      const k = (right - left) / ink;
      add(text, 'tspan', {
        class: isMono ? 'mono' : 'sans',
        x: (left + m.actualBoundingBoxLeft * k).toFixed(2),
        textLength: (m.width * k).toFixed(2),
        lengthAdjust: 'spacingAndGlyphs'
      }, ch);
    });
  });
});
```
